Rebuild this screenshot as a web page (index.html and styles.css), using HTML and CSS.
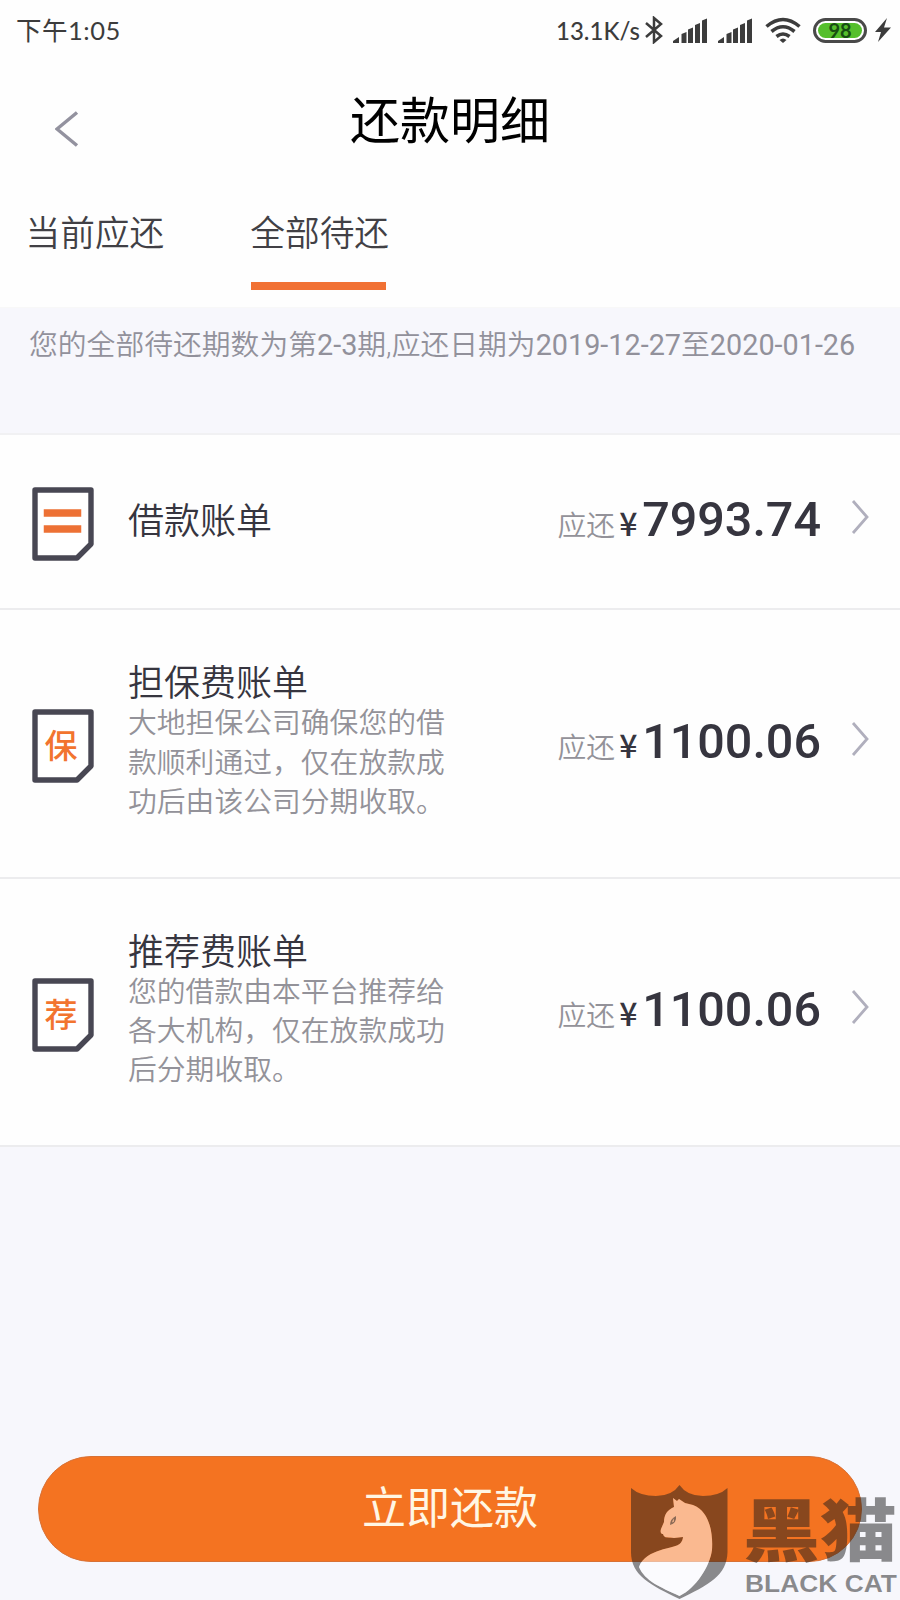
FILE: index.html
```
<!DOCTYPE html>
<html lang="zh-CN">
<head>
    <meta charset="UTF-8">
    <meta name="viewport" content="width=device-width, initial-scale=1.0">
    <title>还款明细</title>
    <link rel="stylesheet" href="styles.css">
</head>
<body>
    <div class="status">
        <span class="time">下午1:05</span>
        <div class="status-icons">
            <span class="speed">13.1K/s</span>
            <svg class="bluetooth" width="18" height="28" viewBox="0 0 18 28"><path d="M1 7l15 13-7 6V2l7 6L1 21" fill="none" stroke="#3c3c3c" stroke-width="2.5"/></svg>
            <svg class="signal" width="34" height="25" viewBox="0 0 34 25"><path d="M0 25v-2l6-4v6zM8.500 16l5-2v11h-5zM15 11.500l5-2V25h-5zM22 7l5-2v20h-5zM29 2.500l5-2V25h-5z" fill="#3c3c3c"/></svg>
            <svg class="signal" width="34" height="25" viewBox="0 0 34 25"><path d="M0 25v-2l6-4v6zM8.500 16l5-2v11h-5zM15 11.500l5-2V25h-5zM22 7l5-2v20h-5zM29 2.500l5-2V25h-5z" fill="#3c3c3c"/></svg>
            <svg class="wifi" width="36" height="26" viewBox="0 0 36 26">
                <path d="M1.500 9.500Q18-4.500 34.500 9.500M6.500 14.500q11.500-9.500 23 0M11.500 19.500q6.500-5 13 0" fill="none" stroke="#3c3c3c" stroke-width="3.6"/>
                <path d="M14.500 23q3.500-3 7 0L18 26z" fill="#3c3c3c"/>
            </svg>
            <div class="battery"><span>98</span></div>
            <svg class="bolt" width="16" height="24" viewBox="0 0 16 24"><path d="M12 0L0 14h6L3 24 16 9.500H9z" fill="#3c3c3c"/></svg>
        </div>
    </div>

    <div class="header">
        <svg class="back" width="24" height="36" viewBox="0 0 24 36"><path d="M22 1.500L2 18l20 16.500" fill="none" stroke="#93929f" stroke-width="3.500"/></svg>
        <h1>还款明细</h1>
    </div>

    <div class="tabs">
        <div class="tab">当前应还</div>
        <div class="tab active">全部待还</div>
    </div>

    <p class="notice">您的全部待还期数为第<span>2-3</span>期,应还日期为<span>2019-12-27</span>至<span>2020-01-26</span></p>

    <div class="bills">
        <div class="bill first">
            <svg class="doc" width="62" height="74" viewBox="0 0 62 74">
                <path d="M3 3h56v54L45 71H3z" fill="#fff" stroke="#484753" stroke-width="5.400" stroke-linejoin="round"/>
                <path d="M15.500 26h30M15.500 42h30" stroke="#ed7135" stroke-width="7.500" stroke-linecap="square"/>
            </svg>
            <div class="info">
                <h2>借款账单</h2>
            </div>
            <div class="amount"><span class="due">应还</span><span class="yen">¥</span><b>7993.74</b></div>
            <svg class="arrow" width="18" height="34" viewBox="0 0 18 34"><path d="M2 1l14 16L2 33" fill="none" stroke="#b0afbd" stroke-width="2.800"/></svg>
        </div>

        <div class="bill">
            <svg class="doc" width="62" height="74" viewBox="0 0 62 74">
                <path d="M3 3h56v54L45 71H3z" fill="#fff" stroke="#484753" stroke-width="5.400" stroke-linejoin="round"/>
                <text class="doc-text" x="29" y="49">保</text>
            </svg>
            <div class="info">
                <h2>担保费账单</h2>
                <p>大地担保公司确保您的借款顺利通过，仅在放款成功后由该公司分期收取。</p>
            </div>
            <div class="amount"><span class="due">应还</span><span class="yen">¥</span><b>1100.06</b></div>
            <svg class="arrow" width="18" height="34" viewBox="0 0 18 34"><path d="M2 1l14 16L2 33" fill="none" stroke="#b0afbd" stroke-width="2.800"/></svg>
        </div>

        <div class="bill">
            <svg class="doc" width="62" height="74" viewBox="0 0 62 74">
                <path d="M3 3h56v54L45 71H3z" fill="#fff" stroke="#484753" stroke-width="5.400" stroke-linejoin="round"/>
                <text class="doc-text" x="29" y="49">荐</text>
            </svg>
            <div class="info">
                <h2>推荐费账单</h2>
                <p>您的借款由本平台推荐给各大机构，仅在放款成功后分期收取。</p>
            </div>
            <div class="amount"><span class="due">应还</span><span class="yen">¥</span><b>1100.06</b></div>
            <svg class="arrow" width="18" height="34" viewBox="0 0 18 34"><path d="M2 1l14 16L2 33" fill="none" stroke="#b0afbd" stroke-width="2.800"/></svg>
        </div>
    </div>

    <button class="pay">立即还款</button>

    <svg class="watermark" width="270" height="116" viewBox="0 0 270 116">
        <!-- shield with the cat cut out -->
        <path class="ink" fill-rule="evenodd" d="M1 4Q10 12 26 12 42 12 49.500 1 57 12 73 12 89 12 97.500 4V68C97 92 78 101 49.500 115 21 101 1 92 1 68zM43 14L44 23C37 26 34 31 34 38L31 45C30 48 31 50 33 50 34 55 39 53 44 54L53 53C52 63 43 62 31 66 21 69 12 74 9 83 15 97 30 103 49.500 112 66 104 80 82 82 66 83 52 81 28 63 21L55 19 49 15 47 17z"/>
        <path class="cat" d="M43 14L44 23C37 26 34 31 34 38L31 45C30 48 31 50 33 50 34 55 39 53 44 54L53 53C52 63 43 62 31 66 21 69 12 74 9 83 15 97 30 103 49.500 112 66 104 80 82 82 66 83 52 81 28 63 21L55 19 49 15 47 17z"/>
        <path class="ink" fill-rule="evenodd" d="M40 41q0-6 6-9 1 7-6 9zM43.500 34.500l-1.500 4 2-1z"/>
        <text class="brand" transform="translate(113 72) scale(1 .88)" textLength="154">黑猫</text>
        <text class="brand-en" x="115" y="108" textLength="152" lengthAdjust="spacingAndGlyphs">BLACK CAT</text>
    </svg>
</body>
</html>
```

FILE: styles.css
```
* {
    margin: 0;
    padding: 0;
    box-sizing: border-box;
}

body {
    position: relative;
    width: 900px;
    height: 1600px;
    overflow: hidden;
    background: #f7f7fc;
    font-family: Roboto, "Noto Sans CJK SC", sans-serif;
    color: #36353f;
}

svg {
    display: block;
    flex-shrink: 0;
}

.status {
    display: flex;
    justify-content: space-between;
    height: 60px;
    padding: 0 9px 0 16px;
    align-items: center;
    background: #fefefe;
    color: #3c3c3c;
    font-family: Lato, "Noto Sans CJK SC", sans-serif;
    font-size: 24px;
}

.time {
    margin-top: -4px;
    font-size: 25.500px;
    letter-spacing: .5px;
}

.status-icons {
    display: flex;
    align-items: center;
}

.speed {
    width: 89px;
    font-weight: 500;
    white-space: nowrap;
}

.bluetooth {
    margin-right: 10px;
}

.signal {
    margin-right: 11px;
}

.wifi {
    margin: 0 12px 0 2px;
}

.battery {
    width: 54px;
    height: 25px;
    margin-right: 8px;
    padding: 2px;
    border: 3px solid #494949;
    border-radius: 13px;
    background: #fff;
}

.battery span {
    display: block;
    height: 15px;
    border-radius: 8px;
    background: #55bf2c;
    color: #174d12;
    font-size: 20px;
    font-weight: bold;
    line-height: 14px;
    text-align: center;
}

.header {
    display: flex;
    height: 130px;
    background: #fefefe;
}

.back {
    margin: 51px 0 0 55px;
}

.header h1 {
    margin-left: 271px;
    color: #000;
    font-size: 50px;
    font-weight: 400;
    line-height: 125px;
}

.tabs {
    display: flex;
    gap: 86px;
    height: 117px;
    padding-left: 25.500px;
    background: #fefefe;
}

.tab {
    height: 100px;
    font-size: 34.700px;
    font-weight: 350;
    line-height: 89px;
    color: #414045;
}

.active {
    background: linear-gradient(#f17134, #f17134) 1px 100% / 135px 8px no-repeat;
}

.notice {
    height: 128px;
    padding-left: 29px;
    border-top: 1px solid #f8f8f8;
    border-bottom: 2px solid #f1f1f3;
    font-size: 28.800px;
    font-weight: 350;
    line-height: 74px;
    color: #92919b;
    white-space: nowrap;
}

.notice span {
    font-weight: 400;
}

.bills {
    background: #fefefe;
}

.bill {
    display: flex;
    align-items: center;
    height: 268.500px;
    padding: 0 31px 0 32px;
    border-bottom: 2px solid #ececee;
}

.first {
    height: 175px;
}

.doc-text {
    fill: #f2742f;
    font-size: 33px;
    font-weight: 500;
    text-anchor: middle;
}

.doc {
    margin-top: 6px;
}

.first .doc {
    margin-top: 4px;
}

.info {
    width: 320px;
    margin-left: 34px;
}

.info h2 {
    font-size: 36px;
    font-weight: 350;
    line-height: 40px;
}

.info p {
    font-size: 28.800px;
    font-weight: 350;
    line-height: 39.200px;
    color: #939299;
}

.amount {
    display: flex;
    flex: 1;
    align-items: baseline;
    justify-content: flex-end;
    margin: -4px 30px 0 0;
}

.due {
    font-size: 28.800px;
    font-weight: 350;
    color: #939299;
}

.yen {
    width: 19px;
    margin: 0 4px;
    font-family: "Noto Sans CJK SC", sans-serif;
    font-size: 32px;
    font-weight: 500;
    line-height: 30px;
}

.amount b {
    font-size: 48.500px;
    font-weight: 500;
}

.arrow {
    margin-top: -9px;
}

.pay {
    display: block;
    width: 824px;
    height: 106px;
    margin: 309px 0 0 38px;
    padding-bottom: 8px;
    border: 1px solid #d87135;
    border-radius: 53px;
    background: #f47321;
    color: #fff6e4;
    font-family: "Noto Sans CJK SC", sans-serif;
    font-size: 44px;
}

.watermark {
    position: absolute;
    left: 630px;
    top: 1484px;
}

.ink {
    fill: rgba(28, 28, 28, .5);
}

.cat {
    fill: rgba(255, 255, 255, .5);
}

.brand {
    fill: rgba(28, 28, 28, .5);
    font-family: "Noto Sans CJK SC", sans-serif;
    font-size: 77px;
    font-weight: 900;
}

.brand-en {
    fill: rgba(28, 28, 28, .5);
    font-family: "Liberation Sans", sans-serif;
    font-size: 23px;
    font-weight: bold;
}
```
